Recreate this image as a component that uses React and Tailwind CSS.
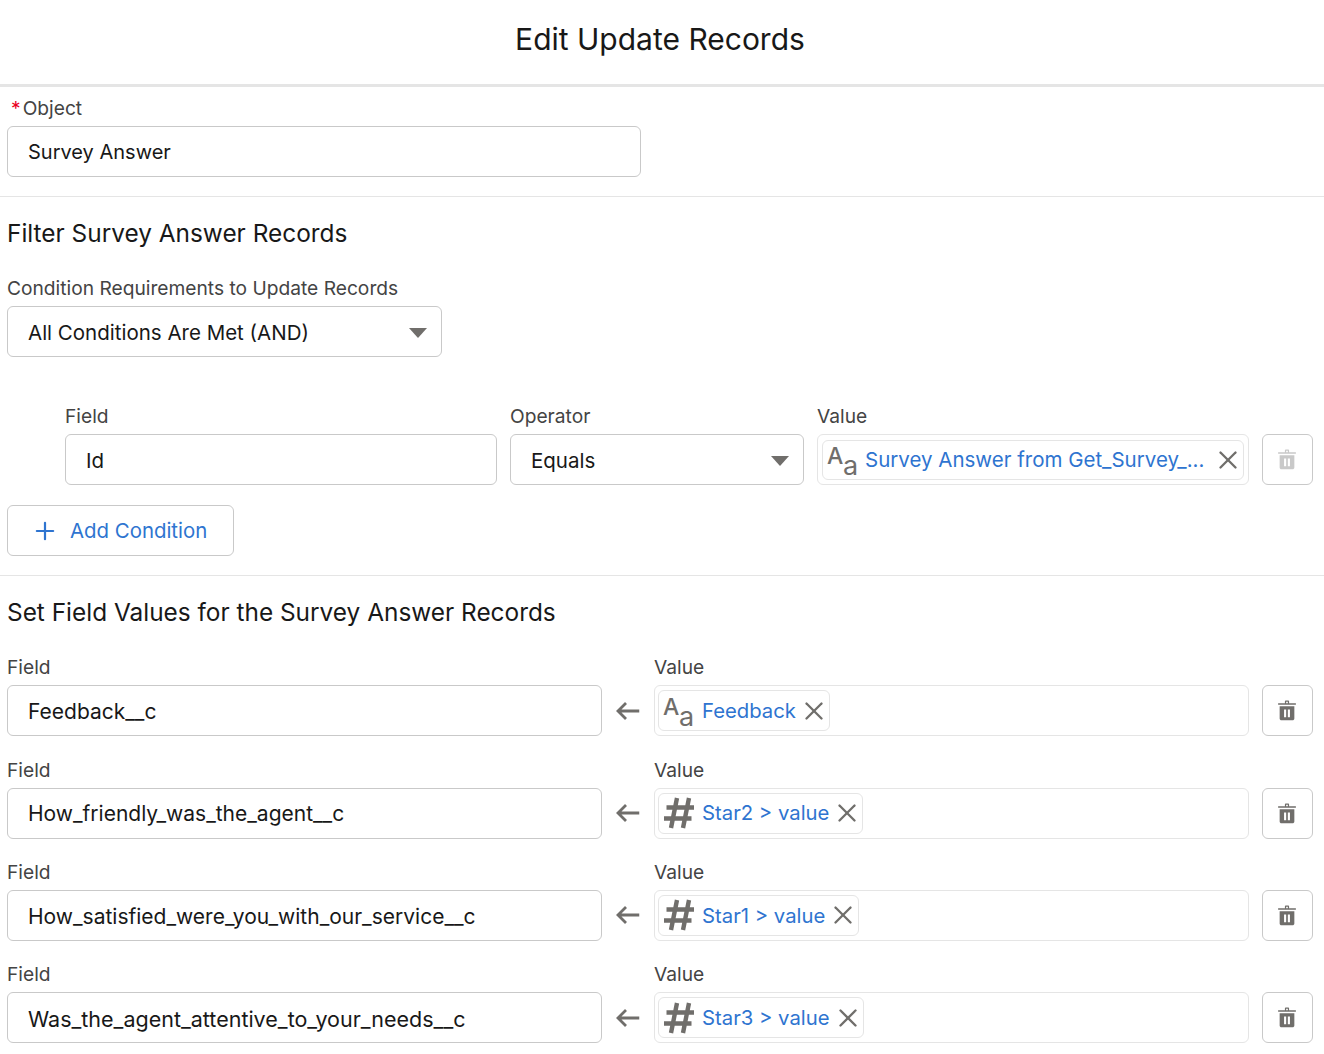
import { Plus, X } from "lucide-react";

function TextIcon() {
  return (
    <span className="relative block h-[32px] w-[32px] shrink-0 text-[#706e6b]">
      <span className="absolute left-[0px] top-[-4px] text-[23px] font-medium leading-[32px]">A</span>
      <span className="absolute left-[16px] top-[6px] text-[27px] font-normal leading-[32px]">a</span>
    </span>
  );
}

function HashIcon() {
  return (
    <svg viewBox="0 0 32 32" className="h-[32px] w-[32px] shrink-0" fill="none" stroke="#706e6b" strokeWidth="4.4">
      <path d="M14 1 8 31M26 1 20 31M3.5 10.5H31M1 21.5h27.5" />
    </svg>
  );
}

function ArrowIcon() {
  return (
    <svg viewBox="0 0 24 20" className="h-[20px] w-[24px] -translate-x-[0.5px]" fill="none" stroke="#706e6b" strokeWidth="2.8">
      <path d="M24 10H2.5M10.5 2 2.5 10l8 8" />
    </svg>
  );
}

function TrashIcon({ color = "#706e6b" }) {
  return (
    <svg viewBox="0 0 18 20" className="h-[21px] w-[19px] -translate-x-[0.5px]" fill={color}>
      <path d="M7 1.5C7 .9 7.5.5 8 .5h2c.5 0 1 .4 1 1V3h6c.4 0 .7.3.7.7s-.3.8-.7.8H1c-.4 0-.7-.4-.7-.8S.6 3 1 3h6V1.5ZM8.2 1.7V3h1.6V1.7H8.2Z" />
      <path fillRule="evenodd" d="M2 6h14v11.5c0 1-.8 1.8-1.8 1.8H3.8c-1 0-1.8-.8-1.8-1.8V6Zm4.2 3v7.5h2V9h-2Zm3.6 0v7.5h2V9h-2Z" />
    </svg>
  );
}

function Caret() {
  return <span className="h-0 w-0 border-x-[9px] border-t-[10px] border-x-transparent border-t-[#706e6b]" />;
}

function Label({ children, required }) {
  return (
    <div className="h-[18px] text-[19.2px] leading-[16px] text-[#444444]">
      {required && <span className="mr-[2px] ml-[4px] text-[#ea001e]">*</span>}
      {children}
    </div>
  );
}

function Box({ children, className = "" }) {
  return <div className={`flex h-[51px] items-center rounded-md border border-[#c9c9c9] bg-white pl-[20px] pr-[14px] text-[#181818] ${className}`}>{children}</div>;
}

function Pill({ icon, label, className = "", textClass = "" }) {
  return (
    <div className={`flex items-center rounded-md border border-[#e5e5e5] pl-[4px] ${className}`}>
      {icon}
      <span className={`min-w-0 flex-1 whitespace-nowrap pt-[1px] text-[#2e74d0] ${textClass}`}>{label}</span>
      <X size={30} color="#706e6b" strokeWidth={1.9} className="ml-[3px] shrink-0" />
    </div>
  );
}

function ValueBox({ children, className = "" }) {
  return <div className={`flex h-[51px] items-center rounded-md border border-[#e5e5e5] bg-white ${className}`}>{children}</div>;
}

function DeleteButton({ disabled }) {
  return (
    <div className="flex h-[51px] w-[51px] shrink-0 items-center justify-center rounded-md border border-[#c9c9c9] bg-white">
      <TrashIcon color={disabled ? "#c9c9c9" : "#706e6b"} />
    </div>
  );
}

const fieldRows = [
  { field: "Feedback__c", value: "Feedback", icon: <TextIcon />, size: "text-[21px]" },
  { field: "How_friendly_was_the_agent__c", value: "Star2 > value", icon: <HashIcon />, size: "text-[21px]" },
  { field: "How_satisfied_were_you_with_our_service__c", value: "Star1 > value", icon: <HashIcon />, size: "text-[21px]" },
  { field: "Was_the_agent_attentive_to_your_needs__c", value: "Star3 > value", icon: <HashIcon />, size: "text-[21.5px]" },
];

export default function App() {
  return (
    <div className="h-[1054px] overflow-hidden bg-white font-['Inter',sans-serif] text-[#181818]">
      <div className="flex h-[87px] items-center justify-center border-b-[3px] border-[#e5e5e5] pb-[5px] pr-[4px] text-[30px] text-[#181818]">Edit Update Records</div>

      <section className="border-b border-[#e5e5e5] px-[7px] pb-[19px] pt-[13px]">
        <Label required>Object</Label>
        <Box className="mt-[8px] w-[634px] text-[20px]">Survey Answer</Box>
      </section>

      <section className="border-b border-[#e5e5e5] px-[7px] pb-[19px] pt-[20px]">
        <h2 className="h-[32px] text-[24.4px] leading-[32px]">Filter Survey Answer Records</h2>
        <div className="mt-[31px]"><Label>Condition Requirements to Update Records</Label></div>
        <Box className="mt-[8px] w-[435px] justify-between pt-[3px] text-[20.5px]">All Conditions Are Met (AND)<Caret /></Box>

        <div className="ml-[58px] mt-[51px] flex gap-[13px]">
          <div className="w-[432px]">
            <Label>Field</Label>
            <Box className="mt-[8px] pt-[3px] text-[20.5px]">Id</Box>
          </div>
          <div className="w-[294px]">
            <Label>Operator</Label>
            <Box className="mt-[8px] justify-between pt-[3px] text-[20.5px]">Equals<Caret /></Box>
          </div>
          <div className="w-[432px]">
            <Label>Value</Label>
            <div className="mt-[8px]">
              <ValueBox className="px-[4px]">
                <Pill icon={<TextIcon />} label="Survey Answer from Get_Survey_..." className="h-[40px] w-full" textClass="ml-[6px] text-[20.5px]" />
              </ValueBox>
            </div>
          </div>
          <div className="pt-[26px]"><DeleteButton disabled /></div>
        </div>

        <div className="mt-[20px] flex h-[51px] w-[227px] items-center gap-[11px] rounded-md border border-[#c9c9c9] pl-[23px] pt-[1px] text-[20.4px] text-[#2e74d0]">
          <Plus size={28} strokeWidth={1.9} />
          Add Condition
        </div>
      </section>

      <section className="px-[7px] pt-[20px]">
        <h2 className="h-[32px] text-[24.4px] leading-[32px]">Set Field Values for the Survey Answer Records</h2>
        <div className="mt-[31.3px] flex flex-col gap-[25.35px]">
          {fieldRows.map((row) => (
            <div key={row.field} className="flex">
              <div className="w-[595px] shrink-0">
                <Label>Field</Label>
                <Box className={`mt-[8px] pt-[2px] ${row.size}`}>{row.field}</Box>
              </div>
              <div className="flex w-[52px] shrink-0 items-center justify-center pt-[26px]">
                <ArrowIcon />
              </div>
              <div className="w-[595px] shrink-0">
                <Label>Value</Label>
                <div className="mt-[8px]">
                  <ValueBox className="px-[3px]">
                    <Pill icon={row.icon} label={row.value} className="h-[41px]" textClass="ml-[7px] text-[20.3px]" />
                  </ValueBox>
                </div>
              </div>
              <div className="ml-[13px] pt-[26px]"><DeleteButton /></div>
            </div>
          ))}
        </div>
      </section>
    </div>
  );
}
